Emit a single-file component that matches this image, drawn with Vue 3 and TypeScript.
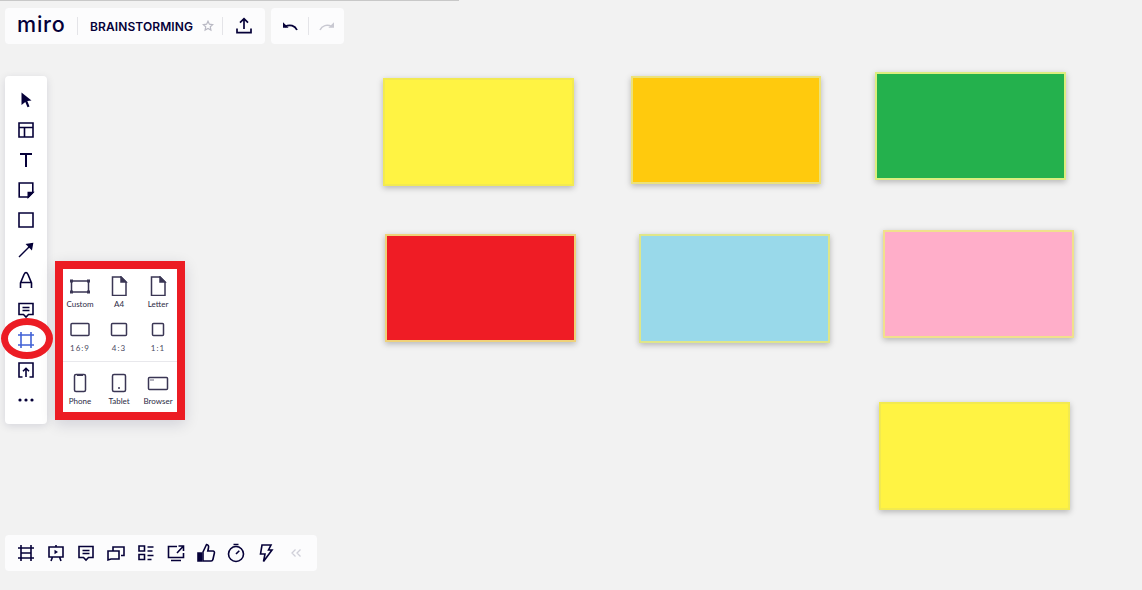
<script setup lang="ts">
interface Sticky { x: number; y: number; w: number; h: number; fill: string; edge: string }
const stickies: Sticky[] = [
  { x: 383, y: 78, w: 191, h: 108, fill: '#fff343', edge: '#f2ea50' },
  { x: 631, y: 76, w: 190, h: 108, fill: '#ffca0d', edge: '#ece27a' },
  { x: 875, y: 72, w: 191, h: 108, fill: '#24b14d', edge: '#dcee80' },
  { x: 385, y: 234, w: 191, h: 108, fill: '#ef1c25', edge: '#efd27a' },
  { x: 639, y: 234, w: 191, h: 109, fill: '#99d9ea', edge: '#dfe68a' },
  { x: 883, y: 230, w: 191, h: 108, fill: '#ffaec9', edge: '#f0e08c' },
  { x: 879, y: 402, w: 191, h: 108, fill: '#fff343', edge: '#f2ea50' }
]
const stickyStyle = (s: Sticky) => ({
  left: s.x + 'px', top: s.y + 'px', width: s.w + 'px', height: s.h + 'px',
  background: s.fill, borderColor: s.edge
})
</script>

<template>
  <div class="page">
    <div class="rule"></div>
    <div v-for="(s, i) in stickies" :key="i" class="sticky" :style="stickyStyle(s)"></div>

    <div class="chrome">
      <header class="top">
        <div class="bar main">
          <span class="logo">miro</span>
          <i class="sep"></i>
          <span class="title">BRAINSTORMING</span>
          <svg class="star" width="12" height="12" viewBox="0 0 12 12"><path d="M6 1.200l1.400 3 3.300.4-2.400 2.200.6 3.300L6 8.500l-2.900 1.600.6-3.300-2.400-2.200 3.300-.4z" fill="none" stroke="#b9b9c4" stroke-width="1.200"/></svg>
          <i class="sep sep2"></i>
          <svg class="share" width="16" height="18" viewBox="0 0 16 18" fill="none" stroke="#050038" stroke-width="1.700"><path d="M8 12V2M4 5.600L8 1.600l4 4M1 11.500v4.200h14v-4.200"/></svg>
        </div>
        <div class="bar undo">
          <svg width="16" height="10" viewBox="0 0 16 10" fill="none" stroke="#050038" stroke-width="1.800"><path d="M15 9C13 4.500 8 3 3 5.600"/><path d="M1 1.200v5.600h5.600" fill="#050038" stroke="none"/></svg>
          <i class="sep"></i>
          <svg width="16" height="10" viewBox="0 0 16 10" fill="none" stroke="#c9c9d2" stroke-width="1.500"><path d="M1 9c2-4.500 7-6 12-3.400"/><path d="M15 1.200v5.600H9.400" fill="#c9c9d2" stroke="none"/></svg>
        </div>
      </header>

      <div class="middle">
        <nav class="tools">
          <svg viewBox="0 0 20 20"><path d="M5.500 2.500l10 8-4.200.6 2.200 5.400-2 .8-2.200-5.300-3.800 3z" fill="#050038"/></svg>
          <svg viewBox="0 0 20 20" class="line"><path d="M3 3h14v14H3zM3 7.500h14M8.500 7.500V17"/></svg>
          <svg viewBox="0 0 20 20" class="line thick"><path d="M4 4h12M10 4v13"/></svg>
          <svg viewBox="0 0 20 20" class="line"><path d="M3.200 3h13.600v9.500l-4.500 4.500H3.200z"/><path d="M16.800 12.500l-4.500 4.500v-4.500z" fill="#050038"/></svg>
          <svg viewBox="0 0 20 20" class="line"><path d="M3 3h14v14H3z"/></svg>
          <svg viewBox="0 0 20 20" class="line thin"><path d="M3 17L14 6"/><path d="M11 4.500l5.500-1-1 5.500z" fill="#050038"/></svg>
          <svg viewBox="0 0 20 20" class="line"><path d="M4.500 18v-5L8 4.500Q10 .5 12 4.500L15.500 13v5M5 12.500h10"/></svg>
          <svg viewBox="0 0 20 20" class="line"><path d="M3 3.500h14v11h-4.500L10 17l-2.500-2.500H3zM6.500 7.500h7M6.500 10.500h7"/></svg>
          <svg viewBox="0 0 20 20" class="line blue"><path d="M5 2v16M15 2v16M2 5h16M2 15h16"/></svg>
          <svg viewBox="0 0 20 20" class="line"><path d="M6.500 17H3V3h14v14h-3.500M10 17V8.500M7 11.300l3-3 3 3"/></svg>
          <svg viewBox="0 0 20 20"><circle cx="4" cy="10" r="1.600" fill="#050038"/><circle cx="10" cy="10" r="1.600" fill="#050038"/><circle cx="16" cy="10" r="1.600" fill="#050038"/></svg>
        </nav>

        <section class="panel">
          <div class="grid">
            <div class="cell">
              <svg viewBox="0 0 22 20" class="pic"><path d="M2.500 5h17v11h-17z"/><g fill="#3a3654" stroke="none"><rect x="1" y="3.500" width="3" height="3"/><rect x="18" y="3.500" width="3" height="3"/><rect x="1" y="14.500" width="3" height="3"/><rect x="18" y="14.500" width="3" height="3"/></g></svg>
              <span>Custom</span>
            </div>
            <div class="cell">
              <svg viewBox="0 0 22 20" class="pic"><path d="M4.500 1h8.500l5 5v13.500H4.500z"/><path d="M13 1l5 5h-5z" fill="#3a3654"/></svg>
              <span>A4</span>
            </div>
            <div class="cell">
              <svg viewBox="0 0 22 20" class="pic"><path d="M4.500 1h8.500l5 5v13.500H4.500z"/><path d="M13 1l5 5h-5z" fill="#3a3654"/></svg>
              <span>Letter</span>
            </div>
            <div class="cell">
              <svg viewBox="0 0 22 20" class="pic"><rect x="2" y="3.500" width="18" height="12" rx="1"/></svg>
              <span class="ratio">16:9</span>
            </div>
            <div class="cell">
              <svg viewBox="0 0 22 20" class="pic"><rect x="3.500" y="3.500" width="15" height="12" rx="1"/></svg>
              <span class="ratio">4:3</span>
            </div>
            <div class="cell">
              <svg viewBox="0 0 22 20" class="pic"><rect x="5.500" y="3.500" width="11" height="12" rx="1"/></svg>
              <span class="ratio">1:1</span>
            </div>
          </div>
          <hr />
          <div class="grid lower">
            <div class="cell">
              <svg viewBox="0 0 22 20" class="pic"><rect x="5.500" y="1.500" width="11" height="17" rx="1.500"/><path d="M8 2h6" stroke-width="2"/></svg>
              <span>Phone</span>
            </div>
            <div class="cell">
              <svg viewBox="0 0 22 20" class="pic"><rect x="4.500" y="1.500" width="13" height="17" rx="1.500"/><circle cx="11" cy="15" r="1" fill="#3a3654" stroke="none"/></svg>
              <span>Tablet</span>
            </div>
            <div class="cell">
              <svg viewBox="0 0 22 20" class="pic"><rect x="1.500" y="4.500" width="19" height="12" rx="1"/><path d="M3.500 7h4" stroke-dasharray="1 1"/></svg>
              <span>Browser</span>
            </div>
          </div>
        </section>
      </div>

      <footer class="bar dock">
        <svg viewBox="0 0 20 20" class="line"><path d="M5 2v16M15 2v16M2 5h16M2 15h16M5 10h10"/></svg>
        <svg viewBox="0 0 20 20" class="line"><path d="M3 4h14v10H3zM10 2v2M6.500 14L5 18M13.500 14l1.500 4"/><path d="M8.500 6.800l3.500 2.200-3.500 2.200z" fill="#050038" stroke="none"/></svg>
        <svg viewBox="0 0 20 20" class="line"><path d="M3 3.500h14v11h-4.500L10 17l-2.500-2.500H3zM6.500 7.500h7M6.500 10.500h7"/></svg>
        <svg viewBox="0 0 20 20" class="line"><path d="M7 8V4h11v8.500h-3M2 8h11v8H5l-3 1z"/></svg>
        <svg viewBox="0 0 20 20" class="line"><path d="M3 3h5.500v5H3zM3 11.500h5.500v5H3zM11.500 4h6M11.500 8h5M11.500 12.500h6M11.500 16.500h4"/></svg>
        <svg viewBox="0 0 20 20" class="line"><path d="M11 3.500H2.500v11h15V10M5 17.500h10M11 10l6-6.500M12.500 3h5v5"/></svg>
        <svg viewBox="0 0 20 20" class="line"><path d="M7 9l3.500-7.500c1.800.2 2.400 1.800 2 3.300L11.800 8H17c1 0 1.700 1 1.400 2l-1.500 6.500c-.2.800-1 1.500-1.800 1.500H7z"/><path d="M2 10h3.500v8H2z" fill="#050038"/></svg>
        <svg viewBox="0 0 20 20" class="line"><circle cx="10" cy="11" r="7.500"/><path d="M7.500 1.500h5M10 11l3.300-3.300"/></svg>
        <svg viewBox="0 0 20 20" class="line"><path d="M6 2h9l-2.500 5H16L7.500 18.500 9 11H4.500z"/></svg>
        <svg viewBox="0 0 20 20" class="fold"><path d="M9.500 6.500L6 10l3.500 3.500M14.500 6.500L11 10l3.500 3.500"/></svg>
      </footer>
    </div>

    <div class="ring"></div>
  </div>
</template>

<style>
html, body { margin: 0; background: #f2f2f2; }
</style>

<style scoped>
.page {
  position: relative;
  width: 1142px;
  height: 590px;
  overflow: hidden;
  background: #f2f2f2;
  font-family: "Inter", "Liberation Sans", sans-serif;
  color: #050038;
}
.rule {
  position: absolute;
  left: 0;
  top: 0;
  width: 459px;
  height: 1px;
  background: #c8c8c8;
}
.sticky {
  position: absolute;
  box-sizing: border-box;
  border: 2px solid;
  box-shadow: 0 2px 6px rgba(0, 0, 0, 0.25);
}
.chrome {
  position: relative;
  display: flex;
  flex-direction: column;
  box-sizing: border-box;
  height: 590px;
  padding: 8px 0 19px 5px;
}
.bar {
  background: #fcfcfd;
  border-radius: 4px;
}
.top {
  display: flex;
  gap: 6px;
  height: 36px;
}
.main {
  display: flex;
  align-items: center;
  width: 260px;
  padding-left: 12px;
  box-sizing: border-box;
}
.logo {
  width: 60px;
  font-size: 21.500px;
  line-height: 36px;
  font-weight: 500;
  letter-spacing: 0.800px;
  margin-top: -5px;
}
.sep {
  display: block;
  flex: none;
  width: 1px;
  height: 18px;
  background: #e4e4e8;
}
.title {
  margin-left: 12px;
  font-size: 12px;
  font-weight: 600;
  letter-spacing: 0.100px;
  white-space: nowrap;
  width: 112px;
}
.star { margin-left: 0; flex: none; }
.sep2 { margin-left: 8px; }
.share { margin-left: 13px; flex: none; }
.undo {
  display: flex;
  align-items: center;
  width: 73px;
  gap: 10px;
  padding-left: 11px;
  box-sizing: border-box;
}
.middle {
  display: flex;
  align-items: flex-end;
  gap: 8px;
  margin-top: 32px;
}
.tools {
  display: flex;
  flex-direction: column;
  align-items: center;
  box-sizing: border-box;
  width: 42px;
  height: 348px;
  padding-top: 9px;
  background: #fff;
  border-radius: 4px;
  box-shadow: 0 2px 8px rgba(5, 0, 56, 0.12);
}
.tools svg {
  width: 20px;
  height: 20px;
  padding: 5px 0;
}
.line {
  fill: none;
  stroke: #050038;
  stroke-width: 1.600;
}
.thick { stroke-width: 2; }
.thin { stroke-width: 1.400; }
.blue { stroke: #4262d6; }
.panel {
  box-sizing: border-box;
  width: 130px;
  height: 159px;
  margin-bottom: 4px;
  padding-right: 2px;
  border: 8px solid #ec1c24;
  background: #fff;
  box-shadow: 0 4px 14px rgba(5, 0, 56, 0.14);
  font-family: "Lato", "Liberation Sans", sans-serif;
}
.grid {
  display: grid;
  grid-template-columns: repeat(3, 39px);
  justify-content: center;
  row-gap: 11px;
  padding-top: 7px;
}
.grid.lower { padding-top: 11px; }
.cell {
  display: flex;
  flex-direction: column;
  align-items: center;
  height: 33px;
  font-size: 8px;
  line-height: 10px;
  color: #2c2a45;
  white-space: nowrap;
}
.ratio { letter-spacing: 1px; color: #4c4a62; }
.pic {
  width: 22px;
  height: 20px;
  margin-bottom: 2.500px;
  flex: none;
  fill: none;
  stroke: #3a3654;
  stroke-width: 1.500;
}
hr {
  margin: 8px -2px 0 0;
  border: 0;
  border-top: 1px solid #e8e8ec;
}
.dock {
  display: flex;
  align-items: center;
  width: 312px;
  height: 36px;
  margin-top: auto;
  padding-left: 11px;
  gap: 10px;
  box-sizing: border-box;
}
.dock svg {
  width: 20px;
  height: 20px;
  flex: none;
}
.fold {
  fill: none;
  stroke: #cfcfd8;
  stroke-width: 1.300;
}
.ring {
  position: absolute;
  left: 1px;
  top: 318px;
  width: 52px;
  height: 41px;
  box-sizing: border-box;
  border: 7px solid #ec1c24;
  border-radius: 50%;
}
</style>
